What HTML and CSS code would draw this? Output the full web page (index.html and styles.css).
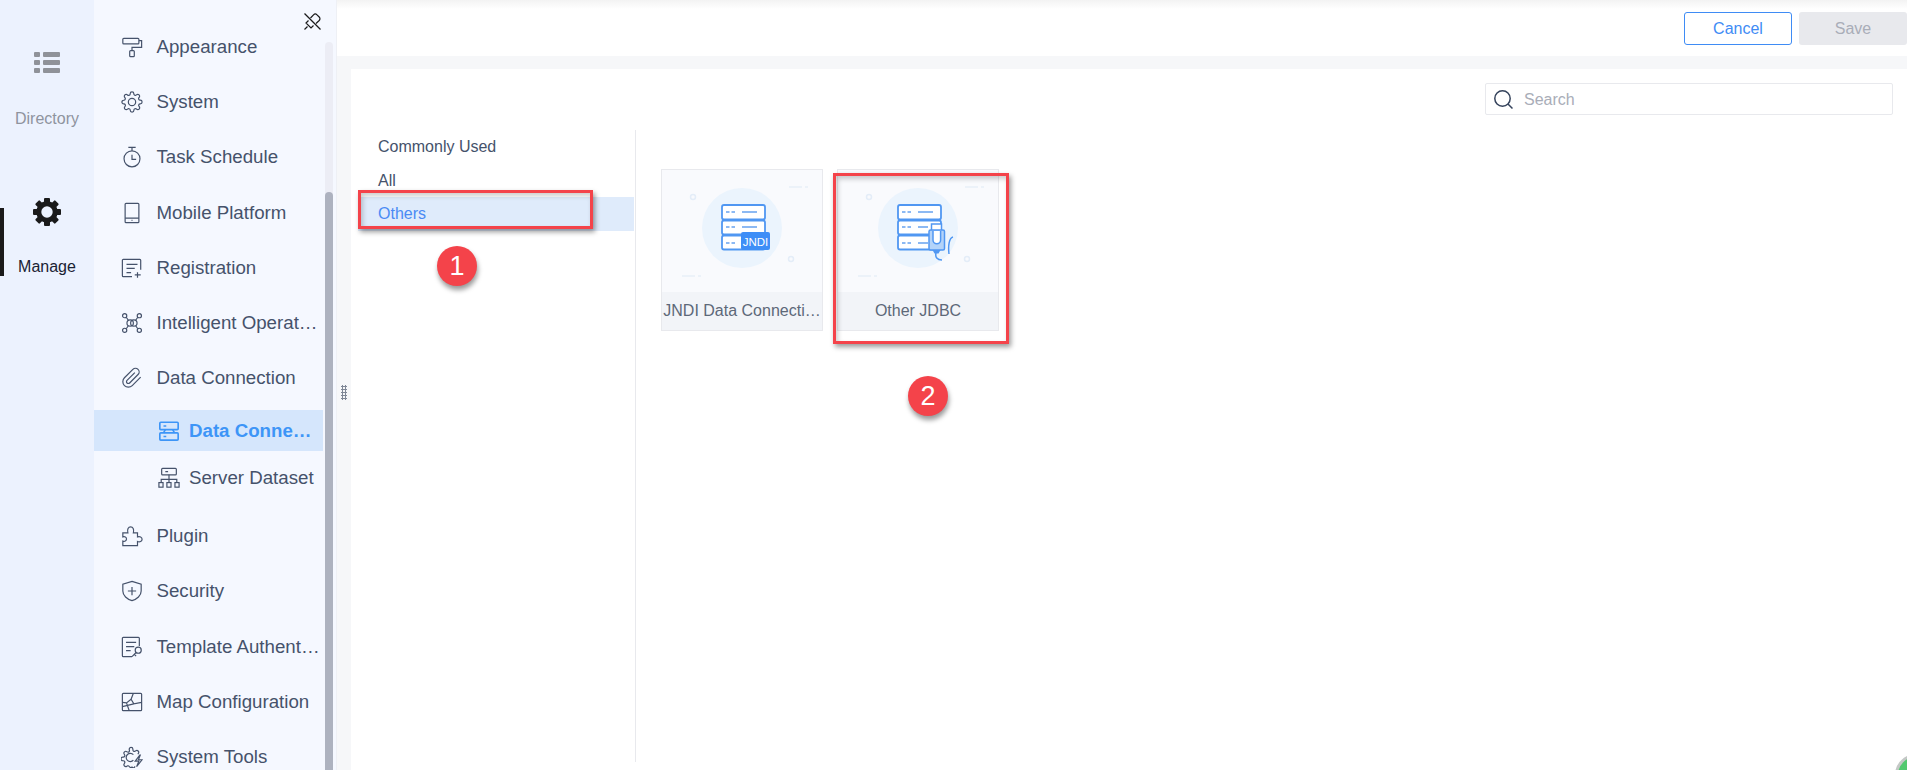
FILE: index.html
```html
<!DOCTYPE html>
<html lang="en">
<head>
  <meta charset="UTF-8" />
  <meta name="viewport" content="width=device-width, initial-scale=1.0"/>
  <title>Data Connection</title>
  <link rel="stylesheet" href="styles.css">
</head>
<body>
  <aside class="rail">
    <div class="rail-item directory">
      <svg class="rail-list" width="26" height="21" viewBox="0 0 26 21" fill="#8f9299">
        <rect x="0" y="0" width="6" height="5" rx="1"/><rect x="9" y="0" width="17" height="5" rx="1"/>
        <rect x="0" y="8" width="6" height="5" rx="1"/><rect x="9" y="8" width="17" height="5" rx="1"/>
        <rect x="0" y="16" width="6" height="5" rx="1"/><rect x="9" y="16" width="17" height="5" rx="1"/>
      </svg>
      <span>Directory</span>
    </div>
    <div class="rail-item manage">
      <i class="rail-mark"></i>
      <svg class="rail-gear" width="28" height="28" viewBox="0 0 28 28" fill="#1a1a1a">
        <circle cx="14" cy="14" r="8.2" fill="none" stroke="#1a1a1a" stroke-width="5"/>
        <rect x="11" y="0" width="6" height="6" rx="1"/>
        <rect x="11" y="22" width="6" height="6" rx="1"/>
        <rect x="0" y="11" width="6" height="6" rx="1"/>
        <rect x="22" y="11" width="6" height="6" rx="1"/>
        <rect x="11" y="0" width="6" height="6" rx="1" transform="rotate(45 14 14)"/>
        <rect x="11" y="22" width="6" height="6" rx="1" transform="rotate(45 14 14)"/>
        <rect x="0" y="11" width="6" height="6" rx="1" transform="rotate(45 14 14)"/>
        <rect x="22" y="11" width="6" height="6" rx="1" transform="rotate(45 14 14)"/>
      </svg>
      <span>Manage</span>
    </div>
  </aside>

  <nav class="side">
    <svg class="pin" width="19" height="19" viewBox="0 0 19 19" fill="none" stroke="#1a1a1a" stroke-width="1.200">
      <path d="M1.500 1.500l16 16"/>
      <path d="M7.500 6 10.500 2.800c1-1 2.500-1 3.500 0l2.200 2.200c1 1 1 2.500 0 3.500L13 11.500M5.500 8.500 3 11l5 5 2.500-2.500M4.500 14.500 1.500 17.500"/>
    </svg>
    <ul class="menu">
      <li class="menu-item">
        <svg class="icon" viewBox="0 0 24 24"><path d="M3 2.500h15.500a1 1 0 0 1 1 1v4a1 1 0 0 1-1 1H3a1 1 0 0 1-1-1v-4a1 1 0 0 1 1-1zM19.500 5H22.500V12.500H12V16"/><rect x="9.500" y="16" width="5" height="6.500" rx="1"/></svg>
        <span class="label">Appearance</span>
      </li>
      <li class="menu-item">
        <svg class="icon" viewBox="0 0 24 24"><circle cx="12" cy="12" r="4"/><path d="M19.400 15a1.650 1.650 0 0 0 .33 1.820l.06.06a2 2 0 0 1 0 2.830 2 2 0 0 1-2.830 0l-.06-.06a1.650 1.650 0 0 0-1.820-.33 1.650 1.650 0 0 0-1 1.510V21a2 2 0 0 1-2 2 2 2 0 0 1-2-2v-.09A1.650 1.650 0 0 0 9 19.400a1.650 1.650 0 0 0-1.820.33l-.06.06a2 2 0 0 1-2.830 0 2 2 0 0 1 0-2.830l.06-.06a1.650 1.650 0 0 0 .33-1.820 1.650 1.650 0 0 0-1.510-1H3a2 2 0 0 1-2-2 2 2 0 0 1 2-2h.09A1.650 1.650 0 0 0 4.600 9a1.650 1.650 0 0 0-.33-1.820l-.06-.06a2 2 0 0 1 0-2.830 2 2 0 0 1 2.830 0l.06.06a1.650 1.650 0 0 0 1.820.33H9a1.650 1.650 0 0 0 1-1.510V3a2 2 0 0 1 2-2 2 2 0 0 1 2 2v.09a1.650 1.650 0 0 0 1 1.510 1.650 1.650 0 0 0 1.820-.33l.06-.06a2 2 0 0 1 2.830 0 2 2 0 0 1 0 2.830l-.06.06a1.650 1.650 0 0 0-.33 1.820V9a1.650 1.650 0 0 0 1.510 1H21a2 2 0 0 1 2 2 2 2 0 0 1-2 2h-.09a1.650 1.650 0 0 0-1.510 1z"/></svg>
        <span class="label">System</span>
      </li>
      <li class="menu-item">
        <svg class="icon" viewBox="0 0 24 24"><circle cx="12" cy="14" r="8.700"/><path d="M8 1.500h8M12 1.500v3.800M12 9.500v5h4.500"/></svg>
        <span class="label">Task Schedule</span>
      </li>
      <li class="menu-item">
        <svg class="icon" viewBox="0 0 24 24"><rect x="4.500" y="1.500" width="15" height="21" rx="1"/><path d="M4.500 17.500h15M11.500 20h1"/></svg>
        <span class="label">Mobile Platform</span>
      </li>
      <li class="menu-item">
        <svg class="icon" viewBox="0 0 24 24"><path d="M12 21.500H2.500a1 1 0 0 1-1-1v-17a1 1 0 0 1 1-1h18a1 1 0 0 1 1 1V14M6 8h12M6 12.500h9M6 17h5M18 16.500v6M15 19.500h6.500"/></svg>
        <span class="label">Registration</span>
      </li>
      <li class="menu-item">
        <svg class="icon" viewBox="0 0 24 24"><circle cx="4" cy="4" r="2.300"/><circle cx="20" cy="4" r="2.300"/><circle cx="4" cy="20" r="2.300"/><circle cx="20" cy="20" r="2.300"/><circle cx="10" cy="12" r="3.500"/><circle cx="14" cy="12" r="3.500"/><path d="M5.700 5.700 8 9M18.300 5.700 16 9M5.700 18.300 8 15M18.300 18.300 16 15"/></svg>
        <span class="label">Intelligent Operat…</span>
      </li>
      <li class="menu-item">
        <svg class="icon" viewBox="0 0 24 24"><path d="M21.440 11.050l-9.190 9.190a6 6 0 0 1-8.490-8.490l9.190-9.190a4 4 0 0 1 5.660 5.660l-9.200 9.190a2 2 0 0 1-2.830-2.830l8.490-8.480"/></svg>
        <span class="label">Data Connection</span>
      </li>
      <li class="submenu">
        <div class="sub-item active">
          <svg class="icon" viewBox="0 0 24 24"><rect x="2" y="2.500" width="20" height="8" rx="1"/><rect x="2" y="14" width="20" height="8" rx="1"/><path d="M6 6.500h3M6 18h3M8 10.500 6 14M16 10.500l2 3.500"/></svg>
          <span class="label">Data Conne…</span>
        </div>
        <div class="sub-item">
          <svg class="icon" viewBox="0 0 24 24"><rect x="4" y="1.500" width="16" height="7" rx="1"/><path d="M8 5h3M12 8.500v5M3.500 17v-3.500h17V17M12 13.500V17"/><rect x="1" y="17" width="4.500" height="5"/><rect x="9.700" y="17" width="4.500" height="5"/><rect x="18.500" y="17" width="4.500" height="5"/></svg>
          <span class="label">Server Dataset</span>
        </div>
      </li>
      <li class="menu-item">
        <svg class="icon" viewBox="0 0 24 24"><path d="M2 22.500V17.500c2 .8 4-.2 4-2.200S4 12.300 2 13V8.500h5.500C6.500 5 8 2 10.500 2S14.500 5 13.500 8.500H18V13c2.500-1 5 .3 5 2.500S20.500 19 18 18v4.500z"/></svg>
        <span class="label">Plugin</span>
      </li>
      <li class="menu-item">
        <svg class="icon" viewBox="0 0 24 24"><path d="M12 1.500 22 4.500V12c0 5-4.500 9-10 10.500C6.500 21 2 17 2 12V4.500zM12 7.500v9M7.500 12h9"/></svg>
        <span class="label">Security</span>
      </li>
      <li class="menu-item">
        <svg class="icon" viewBox="0 0 24 24"><path d="M12 22.500H2.500a1 1 0 0 1-1-1v-19a1 1 0 0 1 1-1h16.500a1 1 0 0 1 1 1V11M5.500 7h11M5.500 11.500h9M5.500 16h5"/><circle cx="18.800" cy="15.500" r="3.300"/><path d="M16.500 18 12 22.500M14.500 20l2 2"/></svg>
        <span class="label">Template Authent…</span>
      </li>
      <li class="menu-item">
        <svg class="icon" viewBox="0 0 24 24"><rect x="1.500" y="2.500" width="21" height="19" rx="1"/><path d="M13.500 2.500 11 9 14 14 22.500 12.500M11 9 6 13 1.500 12.500M6 13 9 21.500M14 14 1.500 17"/></svg>
        <span class="label">Map Configuration</span>
      </li>
      <li class="menu-item">
        <svg class="icon" viewBox="0 0 24 24"><path d="M15 22.200a1.600 1.600 0 0 1-3 .8 2 2 0 0 1-3-.6 1.600 1.600 0 0 0-1.800-.8l-.8.4a2 2 0 0 1-2.800-2.800l.4-.8a1.600 1.600 0 0 0-1.500-2.300H2a2 2 0 0 1 0-4h.5a1.600 1.600 0 0 0 1.500-2.300l-.4-.8a2 2 0 0 1 2.800-2.800l.8.4A1.600 1.600 0 0 0 9 4.200V3.500a2 2 0 0 1 4 0v.7a1.600 1.600 0 0 0 2.300 1.500l.8-.4a2 2 0 0 1 2.800 2.800l-.4.800"/><path d="M13.500 9.500a4.500 4.500 0 1 0 0 6M20.500 10 15.500 16.500h4l-2.500 6 6-7.500h-4l2-5z"/></svg>
        <span class="label">System Tools</span>
      </li>
    </ul>
    <div class="scroll-track"><div class="scroll-thumb"></div></div>
  </nav>

  <main class="page">
    <header class="topbar">
      <button class="btn btn-cancel">Cancel</button>
      <button class="btn btn-save">Save</button>
    </header>
    <div class="workspace">
      <div class="gutter"><i class="grip"></i></div>
      <section class="panel">
        <div class="search-row">
          <div class="search">
            <svg width="21" height="21" viewBox="0 0 21 21" fill="none" stroke="#35435c" stroke-width="1.500"><circle cx="9.500" cy="9.500" r="7.700"/><path d="M15 15l4.500 4.500"/></svg>
            <span>Search</span>
          </div>
        </div>
        <div class="browser">
          <ul class="cats">
            <li>Commonly Used</li>
            <li>All</li>
            <li class="on">Others</li>
          </ul>
          <div class="cards">
            <div class="card">
              <svg class="pic" width="160" height="122" viewBox="0 0 160 122" fill="none">
                <circle cx="80" cy="58" r="40" fill="#ebf4fd"/>
                <circle cx="31" cy="27" r="2.500" stroke="#e4edf8" stroke-width="1.500"/>
                <circle cx="129" cy="89" r="2.500" stroke="#e4edf8" stroke-width="1.500"/>
                <path d="M127 17h13M143 17h3M20 106h13M36 106h3" stroke="#e0eaf6" stroke-width="1.200"/>
                <g stroke="#5097f2" stroke-width="1.800" fill="#fff">
                  <rect x="60" y="35" width="43" height="14.500" rx="2"/>
                  <rect x="60" y="50.500" width="43" height="14" rx="2"/>
                  <rect x="60" y="65.500" width="43" height="14" rx="2"/>
                </g>
                <path d="M64 42h3.500M69.500 42h3.500M80 42h15M64 57h3.500M69.500 57h3.500M80 57h15M64 73h3.500M69.500 73h3.500" stroke="#8cb9f3" stroke-width="2.200"/>
                <rect x="79" y="62" width="29" height="18" rx="2" fill="#3e8ef7"/>
                <text x="93.500" y="75.500" class="tag">JNDI</text>
              </svg>
              <div class="caption">JNDI Data Connecti…</div>
            </div>
            <div class="card">
              <svg class="pic" width="160" height="122" viewBox="0 0 160 122" fill="none">
                <circle cx="80" cy="58" r="40" fill="#ebf4fd"/>
                <circle cx="31" cy="27" r="2.500" stroke="#e4edf8" stroke-width="1.500"/>
                <circle cx="129" cy="89" r="2.500" stroke="#e4edf8" stroke-width="1.500"/>
                <path d="M127 17h13M143 17h3M20 106h13M36 106h3" stroke="#e0eaf6" stroke-width="1.200"/>
                <g stroke="#5097f2" stroke-width="1.800" fill="#fff">
                  <rect x="60" y="35" width="43" height="14.500" rx="2"/>
                  <rect x="60" y="50.500" width="43" height="14" rx="2"/>
                  <rect x="60" y="65.500" width="43" height="14" rx="2"/>
                </g>
                <path d="M64 42h3.500M69.500 42h3.500M80 42h15M64 57h3.500M69.500 57h3.500M80 57h10M64 73h3.500M69.500 73h3.500M80 73h10" stroke="#8cb9f3" stroke-width="2.200"/>
                <rect x="93.500" y="54" width="10" height="7" fill="#fff" stroke="#5097f2" stroke-width="1.500"/>
                <rect x="91" y="60" width="15.500" height="20" rx="1.500" fill="#b3d3f9" stroke="#5097f2" stroke-width="1.500"/>
                <path d="M95 61v9a3.800 3.800 0 0 0 7.600 0V61" fill="#fff" stroke="#5097f2" stroke-width="1.500"/>
                <path d="M94.500 80h8l-2 3.500h-4z" fill="#5097f2"/>
                <path d="M98 83c-1 4 1 7 6 7M111 84c-1-8 0-16 4-17" stroke="#5097f2" stroke-width="1.500"/>
              </svg>
              <div class="caption">Other JDBC</div>
            </div>
          </div>
        </div>
      </section>
    </div>
  </main>

  <!-- screenshot annotations -->
  <div class="mark mark-others"></div>
  <div class="num num-1">1</div>
  <div class="mark mark-jdbc"></div>
  <div class="num num-2">2</div>
  <div class="corner"></div>
</body>
</html>
```

FILE: styles.css
```css
* {
  box-sizing: border-box;
}
html, body {
  height: 100%;
}
body {
  position: relative;
  display: flex;
  margin: 0;
  overflow: hidden;
  font-family: "Liberation Sans", Arial, sans-serif;
  font-size: 16px;
  color: #45526b;
  background: #fff;
}
ul {
  list-style: none;
  margin: 0;
  padding: 0;
}

/* left rail */
.rail {
  display: flex;
  flex-direction: column;
  flex: 0 0 94px;
  padding-top: 52px;
  background: #ecf2fe;
}
.rail-item {
  position: relative;
  display: flex;
  flex-direction: column;
  align-items: center;
}
.rail-item span {
  line-height: 18px;
}
.directory {
  height: 146px;
  color: #8f949e;
}
.rail-list {
  margin-bottom: 37px;
}
.manage {
  color: #1a2233;
}
.rail-gear {
  margin-bottom: 32px;
}
.rail-mark {
  position: absolute;
  left: 0;
  top: 10px;
  width: 4px;
  height: 68px;
  background: #1a1a1a;
}

/* second level menu */
.side {
  position: relative;
  display: flex;
  flex: 0 0 243px;
  background: #f5f8ff;
  border-right: 1px solid #eef0f5;
}
.pin {
  position: absolute;
  left: 209px;
  top: 12px;
}
.menu {
  flex: 0 0 229px;
  padding-top: 19px;
  overflow: hidden;
}
.menu-item {
  display: flex;
  align-items: center;
  height: 55.3px;
  padding-left: 27px;
}
.icon {
  flex: 0 0 22px;
  width: 22px;
  height: 22px;
  margin-right: 13.500px;
  fill: none;
  stroke: #45526b;
  stroke-width: 1.300;
}
.label {
  white-space: nowrap;
  font-size: 18.700px;
}
.submenu {
  display: flex;
  flex-direction: column;
  gap: 6px;
  margin: 4.400px 0 10px;
}
.sub-item {
  display: flex;
  align-items: center;
  height: 41px;
  padding-left: 64px;
}
.sub-item .icon {
  margin-right: 9px;
}
.sub-item.active {
  background: #d5e6fc;
}
.sub-item.active .icon {
  stroke: #3d95f7;
  stroke-width: 1.800;
}
.sub-item.active .label {
  color: #3d95f7;
  font-weight: bold;
}
.scroll-track {
  display: flex;
  flex: 0 0 8px;
  margin: 42px 0 0 2px;
  background: #ecedf5;
  border-radius: 4px 4px 0 0;
}
.scroll-thumb {
  flex: 1;
  margin-top: 150px;
  background: #adb2bf;
  border-radius: 4px 4px 0 0;
}

/* main area */
.page {
  display: flex;
  flex-direction: column;
  flex: 1;
  min-width: 0;
}
.topbar {
  display: flex;
  justify-content: flex-end;
  gap: 7px;
  flex: 0 0 56px;
  padding-top: 12px;
  background: linear-gradient(#f3f3f3, #fff 9px);
}
.btn {
  width: 108px;
  height: 33px;
  padding: 0;
  font-family: inherit;
  font-size: 16px;
  border-radius: 3px;
}
.btn-cancel {
  color: #3f8cf5;
  background: #fff;
  border: 1px solid #3f8cf5;
}
.btn-save {
  color: #a9adb8;
  background: #e8e9ed;
  border: none;
}
.workspace {
  display: flex;
  flex: 1;
  min-height: 0;
  padding-top: 13px;
  background: #f6f7f9;
}
.gutter {
  flex: 0 0 14px;
  padding: 316px 0 0 4px;
}
.grip {
  display: block;
  width: 6px;
  height: 15px;
  background: radial-gradient(circle, #7f8796 1px, transparent 1.100px) 0 0 / 3px 3px;
}
.panel {
  display: flex;
  flex-direction: column;
  flex: 1;
  min-width: 0;
  padding-bottom: 8px;
  background: #fff;
}
.search-row {
  display: flex;
  justify-content: flex-end;
  padding: 14px 14px 0 0;
}
.search {
  display: flex;
  align-items: center;
  gap: 10px;
  width: 408px;
  height: 32px;
  padding-left: 7px;
  color: #a9adb8;
  border: 1px solid #e8e9ed;
  border-radius: 2px;
}
.search span {
  padding-top: 1px;
}
.browser {
  display: flex;
  flex: 1;
  min-height: 0;
  margin-top: 15px;
}
.cats {
  flex: 0 0 285px;
  padding: 0 1px 0 7px;
  border-right: 1px solid #e8e9ed;
}
.cats li {
  height: 33.500px;
  padding-left: 20px;
  line-height: 33.500px;
}
.cats .on {
  color: #4a8af4;
  background: #dfebfb;
}
.cards {
  display: flex;
  align-items: flex-start;
  gap: 14px;
  padding: 39px 0 0 25px;
}
.card {
  display: flex;
  flex-direction: column;
  width: 162px;
  height: 162px;
  background: #f9fafd;
  border: 1px solid #e8e9ed;
}
.pic {
  flex: 0 0 122px;
}
.tag {
  fill: #fff;
  font-family: "Liberation Sans", Arial, sans-serif;
  font-size: 11.500px;
  text-anchor: middle;
}
.caption {
  height: 38px;
  color: #5d6878;
  background: #f2f4f8;
  line-height: 38px;
  text-align: center;
  white-space: nowrap;
}

/* annotations drawn over the screenshot */
.mark {
  position: absolute;
  border: 3px solid #f4434a;
  box-shadow: 2px 3px 5px rgba(0, 0, 0, 0.4), inset 2px 3px 5px rgba(0, 0, 0, 0.2);
}
.mark-others {
  left: 358px;
  top: 190px;
  width: 235px;
  height: 39px;
}
.mark-jdbc {
  left: 833px;
  top: 173px;
  width: 176px;
  height: 171px;
}
.num {
  position: absolute;
  width: 40px;
  height: 40px;
  color: #fff;
  background: #f4434a;
  border-radius: 50%;
  font-size: 27px;
  line-height: 40px;
  text-align: center;
  box-shadow: 1px 4px 5px rgba(0, 0, 0, 0.4);
}
.num-1 {
  left: 437px;
  top: 246px;
}
.num-2 {
  left: 908px;
  top: 376px;
}
.corner {
  position: absolute;
  left: 1895px;
  top: 754px;
  width: 42px;
  height: 42px;
  background: #52c96f;
  border: 3px solid #c4c8c6;
  border-radius: 50%;
}
```
